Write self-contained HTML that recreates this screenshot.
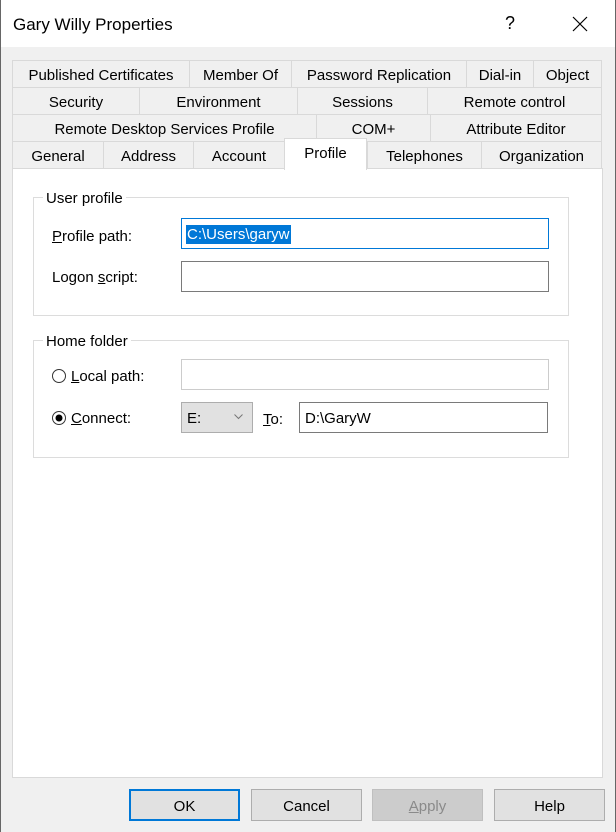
<!DOCTYPE html>
<html><head><style>
*{box-sizing:border-box;margin:0;padding:0}
body{width:616px;height:832px;background:#f0f0f0;font-family:"Liberation Sans",sans-serif;font-size:15px;color:#000;position:relative;overflow:hidden}
.a{position:absolute}
.win{position:absolute;left:0;top:0;width:616px;height:832px;border-left:1px solid #666;border-right:1px solid #666}
.title{position:absolute;left:1px;top:0;width:614px;height:47px;background:#fff}
.tab{position:absolute;height:27px;border:1px solid #d9d9d9;border-right:none;border-bottom:none;background:#f0f0f0;text-align:center;line-height:30px;font-size:15px}
.panel{position:absolute;left:12px;top:168px;width:591px;height:610px;background:#fff;border:1px solid #d9d9d9}
.grp{position:absolute;border:1px solid #dcdcdc}
.lg{position:absolute;background:#fff;padding:0 3px}
.inp{position:absolute;height:31px;border:1px solid #7a7a7a;background:#fff;line-height:31px;padding-left:5px}
.btn{position:absolute;top:789px;width:111px;height:32px;background:#e1e1e1;border:1px solid #adadad;text-align:center;line-height:33px;font-size:15px}
u{text-decoration:underline}
</style></head><body>
<div class="win"></div>
<div class="title"></div>
<div class="a" style="left:13px;top:15px;font-size:17px;">Gary Willy Properties</div>
<div class="a" style="left:505px;top:13px;font-size:18px;">?</div>
<svg class="a" style="left:572px;top:16px" width="16" height="16"><path d="M1 1L15 15M15 1L1 15" stroke="#000" stroke-width="1.2"/></svg>

<div class="tab" style="left:12px;top:60px;width:177px">Published Certificates</div>
<div class="tab" style="left:189px;top:60px;width:102px">Member Of</div>
<div class="tab" style="left:291px;top:60px;width:175px">Password Replication</div>
<div class="tab" style="left:466px;top:60px;width:67px">Dial-in</div>
<div class="tab" style="left:533px;top:60px;width:69px;border-right:1px solid #d9d9d9">Object</div>

<div class="tab" style="left:12px;top:87px;width:127px">Security</div>
<div class="tab" style="left:139px;top:87px;width:158px">Environment</div>
<div class="tab" style="left:297px;top:87px;width:130px">Sessions</div>
<div class="tab" style="left:427px;top:87px;width:175px;border-right:1px solid #d9d9d9">Remote control</div>

<div class="tab" style="left:12px;top:114px;width:304px">Remote Desktop Services Profile</div>
<div class="tab" style="left:316px;top:114px;width:114px">COM+</div>
<div class="tab" style="left:430px;top:114px;width:172px;border-right:1px solid #d9d9d9">Attribute Editor</div>

<div class="tab" style="left:12px;top:141px;width:91px">General</div>
<div class="tab" style="left:103px;top:141px;width:90px">Address</div>
<div class="tab" style="left:193px;top:141px;width:91px">Account</div>
<div class="tab" style="left:367px;top:141px;width:114px">Telephones</div>
<div class="tab" style="left:481px;top:141px;width:121px;border-right:1px solid #d9d9d9">Organization</div>

<div class="panel"></div>
<div class="tab" style="left:284px;top:138px;width:83px;height:32px;background:#fff;border-right:1px solid #d9d9d9;line-height:29px">Profile</div>

<div class="grp" style="left:33px;top:197px;width:536px;height:119px"></div>
<div class="lg" style="left:43px;top:190px">User profile</div>
<div class="a" style="left:52px;top:228px"><u>P</u>rofile path:</div>
<div class="inp" style="left:181px;top:218px;width:368px;border-color:#0078d7;padding-left:4px"><span style="background:#0078d7;color:#fff;padding:1px 1px">C:\Users\garyw</span></div>
<div class="a" style="left:52px;top:269px">Logon <u>s</u>cript:</div>
<div class="inp" style="left:181px;top:261px;width:368px"></div>

<div class="grp" style="left:33px;top:340px;width:536px;height:118px"></div>
<div class="lg" style="left:43px;top:333px">Home folder</div>
<svg class="a" style="left:51px;top:368px" width="16" height="16"><circle cx="8" cy="8" r="6.5" fill="#fff" stroke="#333"/></svg>
<div class="a" style="left:71px;top:368px"><u>L</u>ocal path:</div>
<div class="inp" style="left:181px;top:359px;width:368px;border-color:#cccccc"></div>
<svg class="a" style="left:51px;top:410px" width="16" height="16"><circle cx="8" cy="8" r="6.5" fill="#fff" stroke="#333"/><circle cx="8" cy="8" r="3.5" fill="#000"/></svg>
<div class="a" style="left:71px;top:410px"><u>C</u>onnect:</div>
<div class="inp" style="left:181px;top:402px;width:72px;background:#e1e1e1;border-color:#adadad">E:</div>
<svg class="a" style="left:234px;top:414px" width="9" height="6"><path d="M0.5 0.5L4.5 4.5L8.5 0.5" stroke="#777" fill="none"/></svg>
<div class="a" style="left:263px;top:411px"><u>T</u>o:</div>
<div class="inp" style="left:299px;top:402px;width:249px">D:\GaryW</div>

<div class="btn" style="left:129px;border:2px solid #0078d7;line-height:31px">OK</div>
<div class="btn" style="left:251px">Cancel</div>
<div class="btn" style="left:372px;background:#cccccc;border-color:#bfbfbf;color:#8a8a8a"><u>A</u>pply</div>
<div class="btn" style="left:494px">Help</div>
</body></html>
